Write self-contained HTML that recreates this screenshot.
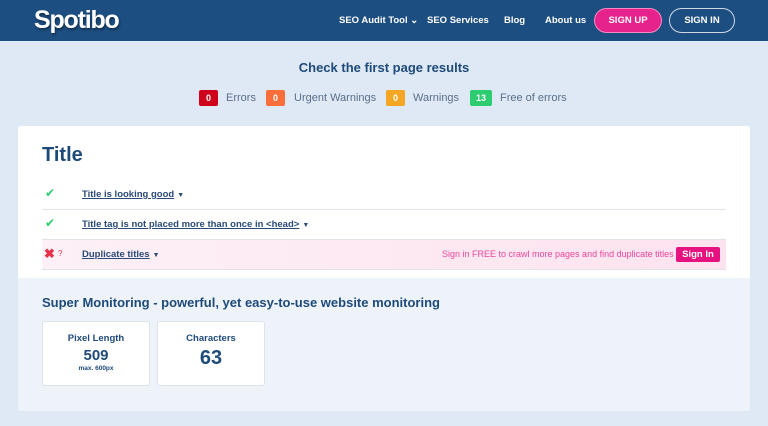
<!DOCTYPE html>
<html><head><meta charset="utf-8"><style>
*{margin:0;padding:0;box-sizing:border-box}
body{width:768px;height:426px;overflow:hidden;background:#dfe9f5;font-family:"Liberation Sans",sans-serif;position:relative;color:#1e4a7a}
.hdr{position:absolute;left:0;top:0;width:768px;height:41px;background:#1d4e82}
.logo{position:absolute;left:34px;top:7px;line-height:26px;color:#fff;font-weight:bold;font-size:25px;letter-spacing:-1.2px;text-shadow:1px 2px 2px rgba(0,0,0,.4)}
.nav{position:absolute;top:15px;color:#fff;font-size:9.5px;font-weight:bold;font-family:"Liberation Sans Narrow","Liberation Sans",sans-serif;white-space:nowrap}
.btn{position:absolute;top:8px;height:25px;border-radius:13px;color:#fff;font-size:9.5px;font-weight:bold;text-align:center;line-height:23px;border:1.5px solid #fff;font-family:"Liberation Sans Narrow","Liberation Sans",sans-serif}
.abs{position:absolute}
.badge{position:absolute;top:90px;height:16px;border-radius:2px;color:#fff;font-size:9px;font-weight:bold;text-align:center;line-height:16px}
.bl{position:absolute;top:92px;font-size:11px;color:#5a6f8a}
.card{position:absolute;left:18px;top:126px;width:732px;height:285px;background:#eef3f9;border-radius:3px}
.top{position:absolute;left:0;top:0;width:732px;height:152px;background:#fff;border-radius:3px 3px 0 0}
.row{position:absolute;left:24px;width:684px;height:30px;border-bottom:1px solid #e0e4ea}
.lnk{position:absolute;left:40px;top:9px;font-size:9.5px;font-weight:bold;color:#2a4a78;white-space:nowrap}
.lnk u{text-decoration:underline}
.lnk i{font-style:normal;font-size:7px;margin-left:3px;text-decoration:none}
.chk{position:absolute;left:3px;top:6px;color:#2ecc71;font-size:12px}
.box{position:absolute;top:195px;width:108px;height:65px;background:#fff;border:1px solid #dde3ea;border-radius:3px;text-align:center;color:#1e4a7a;font-weight:bold}
</style></head><body>
<div class="hdr">
<div class="logo">Spotibo</div>
<div class="nav" style="left:339px">SEO Audit Tool ⌄</div>
<div class="nav" style="left:427px">SEO Services</div>
<div class="nav" style="left:504px">Blog</div>
<div class="nav" style="left:545px">About us</div>
<div class="btn" style="left:594px;width:68px;background:#e6228c;border-color:#f58ac2">SIGN UP</div>
<div class="btn" style="left:669px;width:66px;border-color:#cfd8e4">SIGN IN</div>
</div>
<div class="abs" style="left:0;width:768px;top:60px;text-align:center;font-size:13px;font-weight:bold;color:#1e4a7a">Check the first page results</div>
<div class="badge" style="left:199px;width:19px;background:#d0021b">0</div><div class="bl" style="left:226px">Errors</div>
<div class="badge" style="left:266px;width:19px;background:#fa6e3c">0</div><div class="bl" style="left:294px">Urgent Warnings</div>
<div class="badge" style="left:386px;width:19px;background:#f5a623">0</div><div class="bl" style="left:413px">Warnings</div>
<div class="badge" style="left:470px;width:22px;background:#2ecc71">13</div><div class="bl" style="left:500px">Free of errors</div>
<div class="card">
<div class="top">
<div class="abs" style="left:24px;top:18px;font-size:20px;font-weight:bold;color:#1e4a7a">Title</div>
<div class="row" style="top:54px"><span class="chk">✔</span><span class="lnk"><u>Title is looking good</u><i>▼</i></span></div>
<div class="row" style="top:84px"><span class="chk">✔</span><span class="lnk"><u>Title tag is not placed more than once in &lt;head&gt;</u><i>▼</i></span></div>
<div class="row" style="top:114px;background:linear-gradient(90deg,#fdf0f6,#fde3ef)"><span class="abs" style="left:2px;top:6px;color:#e8304a;font-size:13px;font-weight:bold">✖</span><span class="abs" style="left:16px;top:9px;color:#e8304a;font-size:8px">?</span><span class="lnk"><u>Duplicate titles</u><i>▼</i></span>
<span class="abs" style="left:400px;top:9px;font-size:9px;color:#e9459a">Sign in FREE to crawl more pages and find duplicate titles</span>
<span class="abs" style="left:634px;top:7px;width:44px;height:15px;background:#e6127f;border-radius:2px;color:#fff;font-size:9.5px;font-weight:bold;text-align:center;line-height:15px">Sign In</span></div>
</div>
<div class="abs" style="left:24px;top:169px;font-size:13px;font-weight:bold;color:#1e4a7a">Super Monitoring - powerful, yet easy-to-use website monitoring</div>
<div class="box" style="left:24px"><div style="font-size:9.5px;margin-top:11px">Pixel Length</div><div style="font-size:15px;margin-top:3px">509</div><div style="font-size:6.5px;margin-top:1px">max. 600px</div></div>
<div class="box" style="left:139px"><div style="font-size:9.5px;margin-top:11px">Characters</div><div style="font-size:20px;margin-top:3px">63</div></div>
</div>
</body></html>
